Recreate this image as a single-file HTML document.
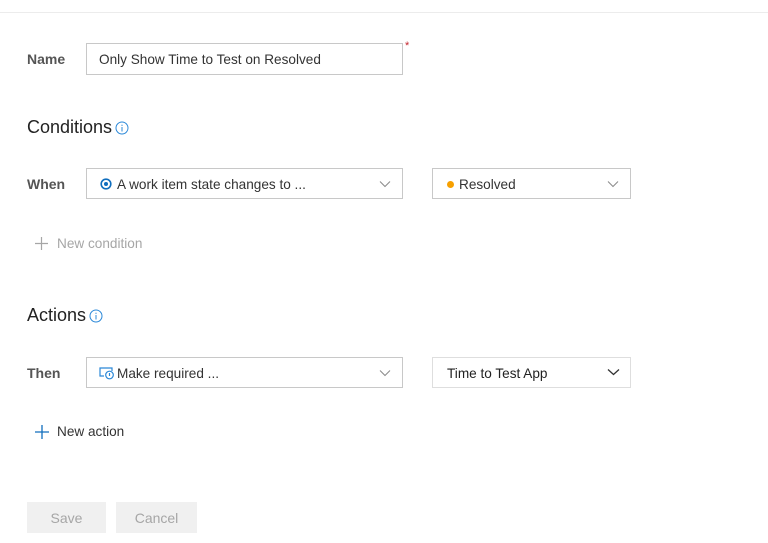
<!DOCTYPE html>
<html><head><style>
body{margin:0;width:768px;height:543px;background:#fff;font-family:"Segoe UI","Liberation Sans",sans-serif;position:relative;overflow:hidden;color:#333}
.a{position:absolute}
.lbl{font-size:14px;font-weight:bold;color:#555}
.box{position:absolute;border:1px solid #c8c8c8;box-sizing:border-box;font-size:13.6px;color:#333;line-height:31px}
.h{font-size:18px;color:#222}
.chev{position:absolute;right:10px;top:9px}
.btn{position:absolute;background:#f0f0f0;color:#a6a6a6;font-size:14px;text-align:center;line-height:32px;height:31px;top:502px}
</style></head><body>
<div class="a" style="left:0;top:12px;width:768px;height:1px;background:#ececec"></div>

<div class="a lbl" style="left:27px;top:51px">Name</div>
<div class="box" style="left:86px;top:43px;width:317px;height:32px;padding-left:12px;line-height:32px">Only Show Time to Test on Resolved</div>
<div class="a" style="left:405px;top:40px;color:#c4262e;font-size:11px">*</div>

<div class="a h" style="left:27px;top:117px">Conditions</div>
<svg class="a" style="left:115px;top:121px" width="14" height="14" viewBox="0 0 14 14"><circle cx="7" cy="7" r="6" fill="none" stroke="#2b88d8" stroke-width="1"/><rect x="6.5" y="6" width="1" height="4.5" fill="#2b88d8"/><rect x="6.5" y="3.7" width="1" height="1.2" fill="#2b88d8"/></svg>

<div class="a lbl" style="left:27px;top:176px">When</div>
<div class="box" style="left:86px;top:168px;width:317px;height:31px;padding-left:30px">A work item state changes to ...
<svg class="a" style="left:13px;top:9px" width="12" height="12" viewBox="0 0 12 12"><circle cx="6" cy="6" r="4.8" fill="none" stroke="#106ebe" stroke-width="1.6"/><circle cx="6" cy="6" r="2" fill="#106ebe"/></svg>
<svg class="chev" style="right:11px;top:11px" width="12" height="8" viewBox="0 0 12 8"><path d="M1 1.5L6 6.5L11 1.5" fill="none" stroke="#8a8a8a" stroke-width="1"/></svg></div>
<div class="box" style="left:432px;top:168px;width:199px;height:31px;padding-left:26px">Resolved
<div class="a" style="left:14px;top:12px;width:7px;height:7px;border-radius:50%;background:#f7a000"></div>
<svg class="chev" style="right:11px;top:11px" width="12" height="8" viewBox="0 0 12 8"><path d="M1 1.5L6 6.5L11 1.5" fill="none" stroke="#8a8a8a" stroke-width="1"/></svg></div>

<svg class="a" style="left:35px;top:237px" width="13" height="13" viewBox="0 0 13 13"><path d="M6.5 0V13M0 6.5H13" stroke="#a6a6a6" stroke-width="1.2"/></svg>
<div class="a" style="left:57px;top:236px;font-size:13.6px;color:#a6a6a6">New condition</div>

<div class="a h" style="left:27px;top:305px">Actions</div>
<svg class="a" style="left:89px;top:309px" width="14" height="14" viewBox="0 0 14 14"><circle cx="7" cy="7" r="6" fill="none" stroke="#2b88d8" stroke-width="1"/><rect x="6.5" y="6" width="1" height="4.5" fill="#2b88d8"/><rect x="6.5" y="3.7" width="1" height="1.2" fill="#2b88d8"/></svg>

<div class="a lbl" style="left:27px;top:365px">Then</div>
<div class="box" style="left:86px;top:357px;width:317px;height:31px;padding-left:30px">Make required ...
<svg class="a" style="left:12px;top:9px" width="16" height="13" viewBox="0 0 16 13"><path d="M5 9H1V1H13V4" fill="none" stroke="#2b88d8" stroke-width="1.2"/><circle cx="10.5" cy="8" r="3.8" fill="#fff" stroke="#2b88d8" stroke-width="1.2"/><path d="M10.5 6V9" stroke="#2b88d8" stroke-width="1.2"/></svg>
<svg class="chev" style="right:11px;top:11px" width="12" height="8" viewBox="0 0 12 8"><path d="M1 1.5L6 6.5L11 1.5" fill="none" stroke="#8a8a8a" stroke-width="1"/></svg></div>
<div class="box" style="left:432px;top:357px;width:199px;height:31px;padding-left:14px;border-color:#dedede;color:#222">Time to Test App
<svg class="chev" style="right:10px;top:10px" width="13" height="8" viewBox="0 0 13 8"><path d="M1 1.5L6.5 6.5L12 1.5" fill="none" stroke="#333" stroke-width="1.3"/></svg></div>

<svg class="a" style="left:35px;top:425px" width="14" height="14" viewBox="0 0 14 14"><path d="M7 0V14M0 7H14" stroke="#106ebe" stroke-width="1.3"/></svg>
<div class="a" style="left:57px;top:424px;font-size:13.6px;color:#333">New action</div>

<div class="btn" style="left:27px;width:79px">Save</div>
<div class="btn" style="left:116px;width:81px">Cancel</div>
</body></html>
